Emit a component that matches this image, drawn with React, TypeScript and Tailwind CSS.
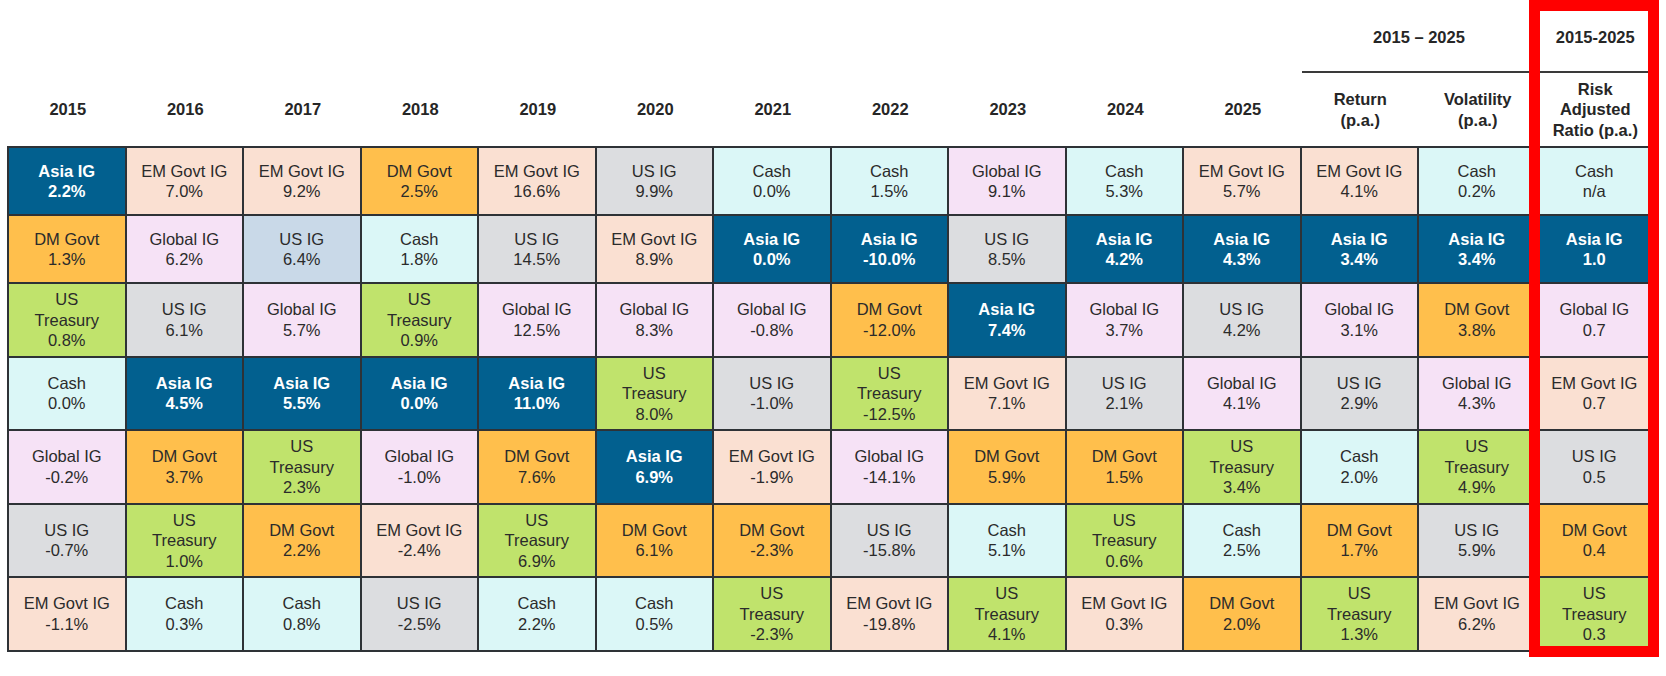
import React from "react";

type Key = "asia" | "em" | "dm" | "glob" | "us" | "usb" | "cash" | "ust";

const tone: Record<Key, { label: string[]; cls: string }> = {
  asia: { label: ["Asia IG"], cls: "bg-[#02608f] text-white font-bold" },
  em: { label: ["EM Govt IG"], cls: "bg-[#fae0d2] text-[#2b2b2b]" },
  dm: { label: ["DM Govt"], cls: "bg-[#ffbf4c] text-[#2b2b2b]" },
  glob: { label: ["Global IG"], cls: "bg-[#f6e2f6] text-[#2b2b2b]" },
  us: { label: ["US IG"], cls: "bg-[#dcdde0] text-[#2b2b2b]" },
  usb: { label: ["US IG"], cls: "bg-[#c9d9e8] text-[#2b2b2b]" },
  cash: { label: ["Cash"], cls: "bg-[#dbf7f7] text-[#2b2b2b]" },
  ust: { label: ["US", "Treasury"], cls: "bg-[#c0e36c] text-[#2b2b2b]" },
};

const years = ["2015", "2016", "2017", "2018", "2019", "2020", "2021", "2022", "2023", "2024", "2025"];

const rows: [Key, string][][] = [
  [["asia", "2.2%"], ["em", "7.0%"], ["em", "9.2%"], ["dm", "2.5%"], ["em", "16.6%"], ["us", "9.9%"], ["cash", "0.0%"], ["cash", "1.5%"], ["glob", "9.1%"], ["cash", "5.3%"], ["em", "5.7%"], ["em", "4.1%"], ["cash", "0.2%"], ["cash", "n/a"]],
  [["dm", "1.3%"], ["glob", "6.2%"], ["usb", "6.4%"], ["cash", "1.8%"], ["us", "14.5%"], ["em", "8.9%"], ["asia", "0.0%"], ["asia", "-10.0%"], ["us", "8.5%"], ["asia", "4.2%"], ["asia", "4.3%"], ["asia", "3.4%"], ["asia", "3.4%"], ["asia", "1.0"]],
  [["ust", "0.8%"], ["us", "6.1%"], ["glob", "5.7%"], ["ust", "0.9%"], ["glob", "12.5%"], ["glob", "8.3%"], ["glob", "-0.8%"], ["dm", "-12.0%"], ["asia", "7.4%"], ["glob", "3.7%"], ["us", "4.2%"], ["glob", "3.1%"], ["dm", "3.8%"], ["glob", "0.7"]],
  [["cash", "0.0%"], ["asia", "4.5%"], ["asia", "5.5%"], ["asia", "0.0%"], ["asia", "11.0%"], ["ust", "8.0%"], ["us", "-1.0%"], ["ust", "-12.5%"], ["em", "7.1%"], ["us", "2.1%"], ["glob", "4.1%"], ["us", "2.9%"], ["glob", "4.3%"], ["em", "0.7"]],
  [["glob", "-0.2%"], ["dm", "3.7%"], ["ust", "2.3%"], ["glob", "-1.0%"], ["dm", "7.6%"], ["asia", "6.9%"], ["em", "-1.9%"], ["glob", "-14.1%"], ["dm", "5.9%"], ["dm", "1.5%"], ["ust", "3.4%"], ["cash", "2.0%"], ["ust", "4.9%"], ["us", "0.5"]],
  [["us", "-0.7%"], ["ust", "1.0%"], ["dm", "2.2%"], ["em", "-2.4%"], ["ust", "6.9%"], ["dm", "6.1%"], ["dm", "-2.3%"], ["us", "-15.8%"], ["cash", "5.1%"], ["ust", "0.6%"], ["cash", "2.5%"], ["dm", "1.7%"], ["us", "5.9%"], ["dm", "0.4"]],
  [["em", "-1.1%"], ["cash", "0.3%"], ["cash", "0.8%"], ["us", "-2.5%"], ["cash", "2.2%"], ["cash", "0.5%"], ["ust", "-2.3%"], ["em", "-19.8%"], ["ust", "4.1%"], ["em", "0.3%"], ["dm", "2.0%"], ["ust", "1.3%"], ["em", "6.2%"], ["ust", "0.3"]],
];

export default function App() {
  return (
    <div className="relative h-[676px] w-[1666px] overflow-hidden bg-white font-['Liberation_Sans',Arial,sans-serif]">
      <div className="ml-[7px] w-[1647px]">
        {/* header */}
        <div className="grid grid-cols-[repeat(14,117.5px)] pl-[2px] text-[16.5px] font-bold leading-[20.5px] text-[#262626]">
          <div className="col-span-11 h-[73px]" />
          <div className="col-span-2 flex h-[73px] items-center justify-center border-b-2 border-[#3a3a3a] pt-[3px]">
            2015 – 2025
          </div>
          <div className="flex h-[73px] items-center justify-center border-b-2 border-[#3a3a3a] pt-[3px]">
            2015-2025
          </div>
          {years.map((y) => (
            <div key={y} className="flex h-[73px] items-center justify-center">
              {y}
            </div>
          ))}
          <div className="flex h-[73px] flex-col items-center justify-center text-center">
            <span>Return</span>
            <span>(p.a.)</span>
          </div>
          <div className="flex h-[73px] flex-col items-center justify-center text-center">
            <span>Volatility</span>
            <span>(p.a.)</span>
          </div>
          <div className="flex h-[73px] flex-col items-center justify-center text-center">
            <span>Risk</span>
            <span>Adjusted</span>
            <span>Ratio (p.a.)</span>
          </div>
        </div>

        {/* body */}
        <div className="grid grid-cols-[repeat(14,117.5px)] border-l-2 border-t-2 border-[#2e3236] text-[16.5px] leading-[20.5px]">
          {rows.map((row, r) =>
            row.map(([k, v], c) => (
              <div
                key={`${r}-${c}`}
                className={`flex min-h-[68px] flex-col items-center justify-center border-b-2 border-r-2 border-[#2e3236] py-[5px] text-center ${tone[k].cls}`}
              >
                {tone[k].label.map((l) => (
                  <span key={l}>{l}</span>
                ))}
                <span>{v}</span>
              </div>
            ))
          )}
        </div>
      </div>

      {/* highlight frame */}
      <div className="pointer-events-none absolute left-[1529px] top-0 h-[657px] w-[130px] border-[11px] border-[#ff0000]" />
    </div>
  );
}
